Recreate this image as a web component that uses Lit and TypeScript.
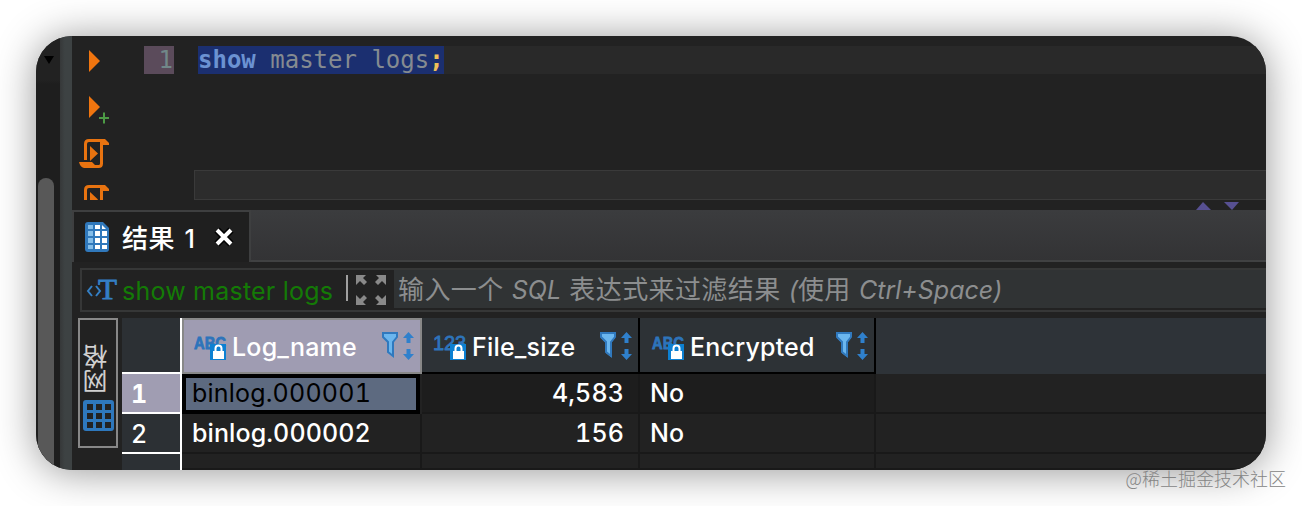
import { html, css, svg, LitElement } from 'lit';
import { customElement, property } from 'lit/decorators.js';
import { classMap } from 'lit/directives/class-map.js';

type ColumnKind = 'text' | 'number';

interface Column {
  name: string;
  kind: ColumnKind;
}

const columns: Column[] = [
  { name: 'Log_name', kind: 'text' },
  { name: 'File_size', kind: 'number' },
  { name: 'Encrypted', kind: 'text' },
];

const rows: string[][] = [
  ['binlog.000001', '4,583', 'No'],
  ['binlog.000002', '156', 'No'],
];

const scrollPaths = svg`
  <path
    d="M6.500 22V6q0-3.500 3.500-3.500H23M22.500 3V25.500q0 3-3 3H6"
    fill="none"
    stroke="#e87310"
    stroke-width="3"
  />
  <path
    d="M20 1h6l4 4v2h-7zM0 24h13l3 3v3H5q-4-1-5-6zM11 8v15l8-7.500z"
    fill="#e87310"
  />
`;

@customElement('sql-toolbar')
export class SqlToolbar extends LitElement {
  static styles = css`
    :host {
      display: flex;
      flex-direction: column;
      width: 38px;
      height: 164px;
      overflow: hidden;
    }

    svg {
      display: block;
      flex: none;
      width: 38px;
      height: 46px;
    }
  `;

  render() {
    return html`
      <svg viewBox="0 0 38 46">
        <path d="M17 14v22l11-11z" fill="#f0750f" />
      </svg>
      <svg viewBox="0 0 38 46">
        <path d="M17 14v22l11-11z" fill="#f0750f" />
        <path d="M32 30.500v11M27 36h10" stroke="#4c9a45" stroke-width="2" />
      </svg>
      <svg viewBox="-7 -10 38 46">${scrollPaths}</svg>
      <svg viewBox="-7 -10 38 46">${scrollPaths}</svg>
    `;
  }
}

@customElement('column-header')
export class ColumnHeader extends LitElement {
  static styles = css`
    :host {
      display: flex;
      align-items: center;
      color: #fff;
      font: 450 25px/30px Inter, 'Noto Sans CJK SC', sans-serif;
    }

    svg {
      display: block;
      flex: none;
      overflow: visible;
    }

    .name {
      flex: 1;
      padding: 2px 0 0 5px;
      letter-spacing: 0.2px;
      white-space: nowrap;
    }

    .kind {
      font: 700 17px 'Liberation Sans', sans-serif;
      fill: #2d74bb;
      stroke: #2d74bb;
      stroke-width: 0.8px;
    }

    .kind.number {
      font-size: 20px;
      font-weight: 400;
    }
  `;

  @property({ type: String }) name: string = '';
  @property({ type: String }) kind: ColumnKind = 'text';

  render() {
    return html`
      <svg width="34" height="28" viewBox="0 0 34 28">
        ${this.kind === 'text'
          ? svg`<text class="kind" x="1" y="17" textLength="32" lengthAdjust="spacingAndGlyphs">ABC</text>`
          : svg`<text class="kind number" x="0" y="18" textLength="33">123</text>`}
        <path d="M17 12h16v16H17z" fill="#0c80d2" />
        <path d="M20 19h11v8H20z" fill="#fff" />
        <path
          d="M22.500 19v-2.500a3 3 0 0 1 6 0V19"
          fill="none"
          stroke="#fff"
          stroke-width="2"
        />
      </svg>
      <span class="name">${this.name}</span>
      <svg width="34" height="28" viewBox="0 0 34 28">
        <path d="M1 1h14v5l-4 5v14l-5-4V11L1 6z" fill="#6bb6ee" />
        <path
          d="M1 1h14v4l-4 5v14l-5-4V10L1 5z"
          fill="none"
          stroke="#3079be"
          stroke-width="2"
        />
        <path
          d="M26.500 0l5.500 6h-3.500v5h-4V6H21zM26.500 28l5.500-6h-3.500v-5h-4v5H21z"
          fill="#2f80cc"
        />
      </svg>
    `;
  }
}

@customElement('result-grid')
export class ResultGrid extends LitElement {
  static styles = css`
    :host {
      display: grid;
      grid-template-columns: 60px 240px 218px 236px 1fr;
      grid-template-rows: 56px 40px 40px 16px;
      color: #fff;
      font: 450 25px/36px Inter, 'Noto Sans CJK SC', sans-serif;
      font-variant-numeric: tabular-nums;
      overflow: hidden;
    }

    :host > * {
      box-sizing: border-box;
      white-space: nowrap;
    }

    .corner,
    .number {
      background: #2c3034;
      border-right: 2px solid #fff;
      border-bottom: 2px solid #fff;
    }

    .number {
      padding: 2px 0 0 9px;
    }

    .number.current {
      background: #a09db2;
      font-weight: 700;
    }

    .number.last {
      border-bottom: none;
    }

    column-header {
      padding: 1px 4px 0 11px;
      background: #2d3236;
      border-right: 2px solid #000;
      border-bottom: 2px solid #000;
    }

    column-header.current {
      padding: 0 4px 0 9px;
      background: #9f9cb2;
      border: 2px solid #888;
    }

    .rest {
      background: #2e3338;
    }

    .cell {
      padding: 1px 14px 0 10px;
      border-right: 2px solid #191919;
      border-bottom: 2px solid #191919;
      background: #222;
      letter-spacing: 0.1px;
    }

    .cell.current {
      background: #1d1d1d;
    }

    .cell.selected {
      margin-right: 2px;
      padding: 0 6px;
      line-height: 30px;
      border: 4px solid #000;
      background: #5d6a80;
      color: #000;
      font-weight: 400;
      letter-spacing: 0.2px;
    }

    .cell.right {
      text-align: right;
    }

    .cell.blank {
      border-right: none;
      background: #222;
    }
  `;

  render() {
    return html`
      <div class="corner"></div>
      ${columns.map(
        (column, i) => html`
          <column-header
            class=${classMap({ current: i === 0 })}
            .name=${column.name}
            .kind=${column.kind}
          ></column-header>
        `
      )}
      <div class="rest"></div>
      ${rows.map(
        (row, r) => html`
          <div class=${classMap({ number: true, current: r === 0 })}>
            ${r + 1}
          </div>
          ${row.map(
            (value, i) => html`
              <div
                class=${classMap({
                  cell: true,
                  current: r === 0,
                  selected: r === 0 && i === 0,
                  right: columns[i].kind === 'number',
                })}
              >
                ${value}
              </div>
            `
          )}
          <div class="cell blank"></div>
        `
      )}
      <div class="number last"></div>
      ${columns.map(() => html`<div class="cell"></div>`)}
      <div class="cell blank"></div>
    `;
  }
}

@customElement('app-root')
export class AppRoot extends LitElement {
  static styles = css`
    :host {
      display: block;
      position: relative;
      box-sizing: border-box;
      height: 506px;
      padding: 36px;
      overflow: hidden;
      background: #fff;
      font-family: Inter, 'Noto Sans CJK SC', sans-serif;
    }

    svg {
      display: block;
      flex: none;
    }

    .window {
      display: flex;
      height: 434px;
      border-radius: 36px;
      overflow: hidden;
      background: #222;
    }

    .shadow {
      border-radius: 36px;
      box-shadow: 0 2px 40px rgba(0, 0, 0, 0.42);
    }

    .scroll {
      display: flex;
      flex-direction: column;
      align-items: flex-start;
      width: 24px;
      background: linear-gradient(#222 44px, #1e1e1e 48px);
    }

    .scroll svg {
      margin: 20px 0 0 7px;
    }

    .thumb {
      flex: 1;
      width: 16px;
      margin: 114px 0 0 2px;
      border-radius: 8px 8px 0 0;
      background: #585858;
    }

    .sash {
      width: 12px;
      background: linear-gradient(90deg, #363839, #3d4243 40%, #3d4243);
    }

    .main {
      flex: 1;
      display: flex;
      flex-direction: column;
      min-width: 0;
    }

    .editor {
      display: flex;
      height: 164px;
    }

    .code {
      flex: 1;
      display: flex;
      flex-direction: column;
      justify-content: space-between;
    }

    .line {
      display: flex;
      margin: 10px 0 0 34px;
      font: 24px/28px 'DejaVu Sans Mono', monospace;
      white-space: pre;
    }

    .line-number {
      box-sizing: border-box;
      width: 30px;
      margin-right: 24px;
      padding-right: 1px;
      background: #5b4b5b;
      color: #718889;
      text-align: right;
    }

    .statement {
      background: #1b2f70;
      color: #858b91;
    }

    .keyword {
      color: #6b92d2;
      font-weight: 700;
    }

    .semicolon {
      color: #eebf59;
      font-weight: 700;
    }

    .line-rest {
      flex: 1;
      background: #292929;
    }

    .track {
      box-sizing: border-box;
      height: 30px;
      margin-left: 84px;
      border: solid #3a3a3a;
      border-width: 1px 0 1px 1px;
      background: #2c2c2c;
    }

    .arrows {
      display: flex;
      justify-content: flex-end;
      gap: 13px;
      height: 10px;
      padding-right: 27px;
    }

    .arrows svg {
      margin-top: 2px;
    }

    .tabs {
      box-sizing: border-box;
      display: flex;
      height: 52px;
      border-bottom: 2px solid #404142;
      background: linear-gradient(#3b3c3e, #333335);
    }

    .tab {
      box-sizing: border-box;
      display: flex;
      align-items: center;
      width: 179px;
      height: 52px;
      padding: 2px 0 0 11px;
      border: solid #3e3f40;
      border-width: 2px 2px 0 2px;
      background: #1f1f1f;
      color: #fff;
      font-size: 25px;
      font-weight: 450;
    }

    .title {
      width: 92px;
      padding: 0 0 3px 13px;
      white-space: nowrap;
    }

    .title .cjk {
      padding-right: 3px;
    }

    .tab svg {
      margin-bottom: 2px;
    }

    .cjk {
      font-family: 'Noto Sans CJK SC', sans-serif;
      font-size: 26px;
      font-style: normal;
      letter-spacing: 0.4px;
    }

    .filter {
      box-sizing: border-box;
      display: flex;
      align-items: center;
      height: 44px;
      margin: 6px 0 6px 8px;
      border: solid #363737;
      border-width: 2px 0 2px 2px;
      background: #222;
      white-space: nowrap;
    }

    .filter svg.type {
      margin-left: 4px;
      overflow: visible;
    }

    .type text {
      font: 29px 'Liberation Serif', serif;
      fill: #347fc4;
      stroke: #347fc4;
      stroke-width: 0.8px;
    }

    .query {
      width: 224px;
      padding: 1px 0 0 4px;
      color: #147a06;
      font-size: 25px;
      letter-spacing: 0.22px;
    }

    .separator {
      align-self: flex-start;
      width: 2px;
      height: 26px;
      margin: 5px 8px 0 0;
      background: #a0a0a0;
    }

    .placeholder {
      box-sizing: border-box;
      flex: 1;
      height: 38px;
      margin: 0 0 2px 8px;
      padding-left: 4px;
      background: #303334;
      color: #8c8e8f;
      font-size: 25px;
      font-style: italic;
      line-height: 35px;
      word-spacing: 1.2px;
    }

    .results {
      flex: 1;
      display: flex;
      gap: 4px;
      padding-left: 6px;
    }

    .side-tab {
      box-sizing: border-box;
      display: flex;
      flex-direction: column;
      align-items: center;
      justify-content: flex-end;
      width: 40px;
      height: 130px;
      padding-bottom: 15px;
      gap: 6px;
      border: 2px solid #888;
      color: #d0d0d0;
    }

    .side-tab span {
      margin-right: 7px;
      writing-mode: vertical-rl;
      transform: rotate(180deg);
      font: 25px/36px 'Noto Sans CJK SC', sans-serif;
    }

    result-grid {
      flex: 1;
      height: 152px;
    }

    .watermark {
      position: absolute;
      right: 16px;
      bottom: 14px;
      color: #858585;
      font: 300 18px/28px 'Noto Sans CJK SC', sans-serif;
    }
  `;

  render() {
    return html`
      <div class="shadow">
        <div class="window">
          <div class="scroll">
            <svg width="12" height="8"><path d="M1 0h10L6 8z" /></svg>
            <div class="thumb"></div>
          </div>
          <div class="sash"></div>
          <div class="main">
            <div class="editor">
              <sql-toolbar></sql-toolbar>
              <div class="code">
                <div class="line">
                  <span class="line-number">1</span
                  ><span class="statement"
                    ><span class="keyword">show</span> master logs<span
                      class="semicolon"
                      >;</span
                    ></span
                  ><span class="line-rest"></span>
                </div>
                <div class="track"></div>
              </div>
            </div>
            <div class="arrows">
              <svg width="15" height="8">
                <path d="M7 0l8 8H0z" fill="#575092" />
              </svg>
              <svg width="15" height="8">
                <path d="M0 0h15L8 8z" fill="#575092" />
              </svg>
            </div>
            <div class="tabs">
              <div class="tab">
                <svg width="24" height="30" viewBox="0 0 24 30">
                  <path
                    d="M3 0h15l6 6v21q0 3-3 3H3q-3 0-3-3V3q0-3 3-3z"
                    fill="#3078bb"
                  />
                  <path
                    d="M3 3h5v4H3zM3 9h5v5H3zM3 16h5v5H3zM3 23h5v4H3z"
                    fill="#83bde9"
                  />
                  <path
                    d="M10 3h5v4h-5zM10 9h5v5h-5zM10 16h5v5h-5zM10 23h5v4h-5zM17 3l4 4h-4zM17 9h5v5h-5zM17 16h5v5h-5zM17 23h5v4h-5z"
                    fill="#fff"
                  />
                </svg>
                <span class="title"><span class="cjk">结果</span> 1</span>
                <svg width="20" height="20" viewBox="0 0 20 20">
                  <path
                    d="M3 3l14 14M17 3L3 17"
                    stroke="#000"
                    stroke-width="7"
                  />
                  <path
                    d="M3 3l14 14M17 3L3 17"
                    stroke="#fff"
                    stroke-width="4"
                  />
                </svg>
              </div>
            </div>
            <div class="filter">
              <svg class="type" width="32" height="24" viewBox="0 0 32 24">
                <path
                  d="M6 8l-4 5 4 5M10 8l4 5-4 5"
                  fill="none"
                  stroke="#347fc4"
                  stroke-width="2"
                />
                <text
                  x="12"
                  y="21"
                  textLength="19"
                  lengthAdjust="spacingAndGlyphs"
                >
                  T
                </text>
              </svg>
              <span class="query">show master logs</span>
              <div class="separator"></div>
              <svg width="30" height="30" viewBox="0 0 30 30">
                <path
                  d="M0 0h10L7 3l4 4-3 3-4-4-4 4zM30 0v10l-4-4-4 4-3-3 4-4-3-3zM0 30V20l4 4 4-4 3 3-4 4 3 3zM30 30H20l3-3-4-4 3-3 4 4 4-4z"
                  fill="#898989"
                />
              </svg>
              <div class="placeholder">
                <span class="cjk">输入一个</span> SQL
                <span class="cjk">表达式来过滤结果</span> (<span class="cjk"
                  >使用</span
                >
                Ctrl+Space)
              </div>
            </div>
            <div class="results">
              <div class="side-tab">
                <span>网格</span>
                <svg width="31" height="31" viewBox="0 0 31 31">
                  <rect width="31" height="31" rx="3" fill="#2e78bd" />
                  <path
                    d="M4 4h6v6H4zM13 4h6v6h-6zM22 4h6v6h-6zM4 13h6v6H4zM13 13h6v6h-6zM22 13h6v6h-6zM4 22h6v6H4zM13 22h6v6h-6zM22 22h6v6h-6z"
                    fill="#222"
                  />
                </svg>
              </div>
              <result-grid></result-grid>
            </div>
          </div>
        </div>
      </div>
      <div class="watermark">@稀土掘金技术社区</div>
    `;
  }
}

export default AppRoot;
